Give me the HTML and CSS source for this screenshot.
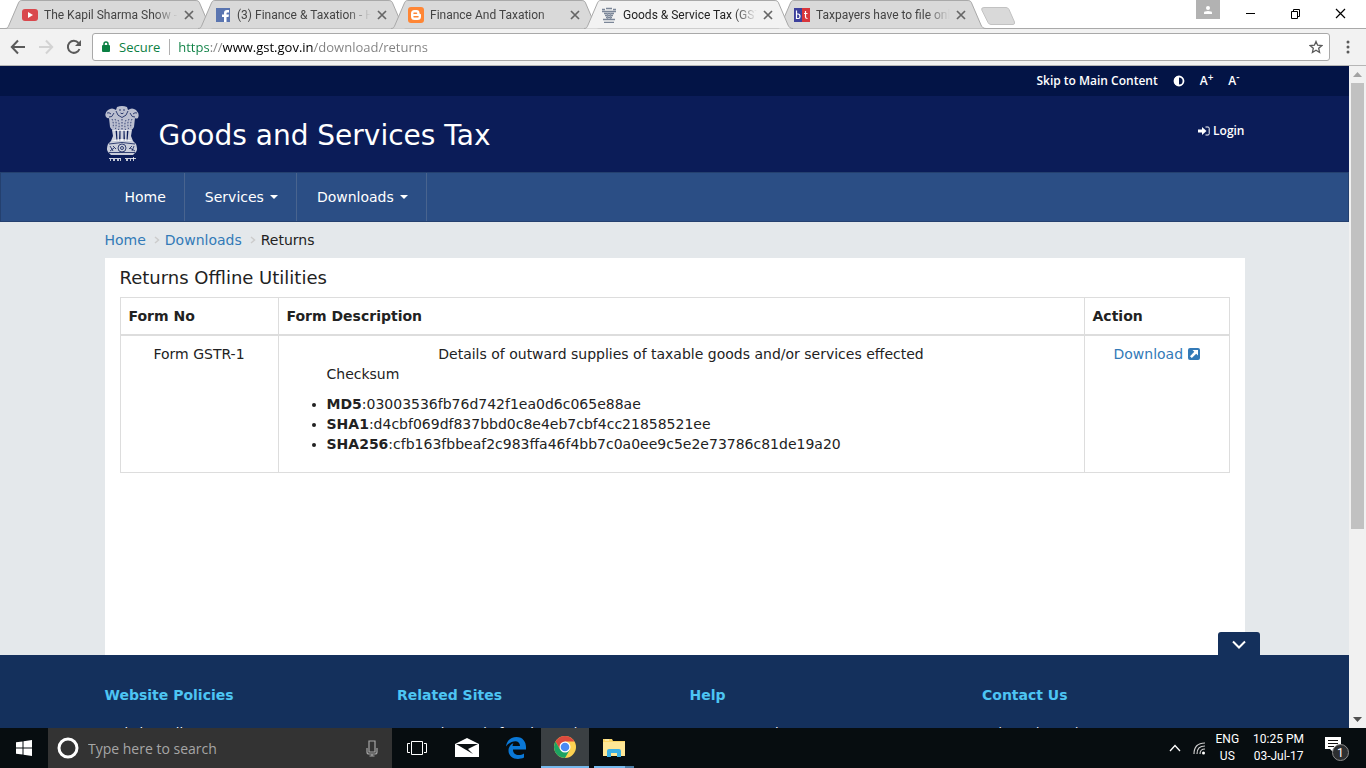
FILE: index.html
```html
<!DOCTYPE html>
<html lang="en">
<head>
  <meta charset="UTF-8">
  <meta name="viewport" content="width=device-width, initial-scale=1.0">
  <title>Goods &amp; Service Tax (GST)</title>
  <link rel="stylesheet" href="styles.css">
</head>
<body>
  <svg class="defs" width="0" height="0">
    <symbol id="tab-shape" viewBox="0 0 209 29">
      <path d="M0 28.500 C3 28.500 3 27 4 25 L13 4 C14.500 .5 15 .5 18 .5 H190 C193 .5 194 1 195 4 L204 25 C205 27 206 28.500 209 28.500"/>
    </symbol>
    <symbol id="close" viewBox="0 0 10 10">
      <path d="M1 1 L9 9 M9 1 L1 9" fill="none" stroke="currentColor" stroke-width="1.700"/>
    </symbol>
    <symbol id="emblem" viewBox="0 0 34 56">
      <g fill="currentColor">
        <path d="M12 1 Q17 -1 22 1 L23 4 Q27 1 31 4 Q35 8 33 12 Q31 13 30 12 L29 21 Q27 25 23 25 H11 Q7 25 5 21 L4 12 Q3 13 1 11 Q-1 7 3 4 Q7 1 11 4 Z" opacity=".72"/>
        <path d="M7 24 H10.500 L11.500 35 H6 L8 30 Z M12 24 H14.500 L14 35 H12.500 Z M15.500 24 H18.500 V35 H15.500 Z M19.500 24 H22 L21.500 35 H20 Z M23.500 24 H27 L26 30 L28 35 H22.500 Z" opacity=".8"/>
        <path d="M6 35 Q17 31 28 35 L31 38 Q33 43 31 46 L28 49 H6 L3 46 Q1 43 3 38 Z" opacity=".78"/>
        <path d="M4 52 H16 V53 H4 Z M20 52 H31 V53 H20 Z" opacity=".8"/>
        <path d="M5 53 h1 v2 h-1z M8 53 h2 v2 h-2z M12 53 h2 v2 h-2z M15 53 h1 v2 h-1z M21 53 h2 v2 h-2z M25 53 h1 v2 h-1z M28 51 h1 v4 h-1z" opacity=".75"/>
      </g>
      <g fill="none" stroke="var(--ink)" stroke-width=".8">
        <path d="M11 5 Q12 10 17 11.500 Q22 10 23 5 M14 4 H16 M18 4 H20 M15.500 7 Q17 8.500 18.500 7 M2 7 Q4 6 6 8 M28 8 Q30 6 32 7 M4 11 Q7 12 9 7 M30 11 Q27 12 25 7"/>
        <path d="M7 13 Q9 17 8 22 M10 13 Q12 17 10.500 23 M13 14 Q15 18 13.500 24 M17 13 V24 M21 14 Q19 18 20.500 24 M24 13 Q22 17 23.500 23 M27 13 Q25 17 26 22" stroke-dasharray="1.500 1.500"/>
        <path d="M4 38 Q17 35 30 38 M4 46.500 H30 M5 40 L8 45 M8 40 L11 43 M5 45 L9 42 M24 43 L27 40 M25 42 L30 45 M29 40 L27 45"/>
        <circle cx="17" cy="42" r="4"/>
        <circle cx="17" cy="42" r="1.500"/>
      </g>
    </symbol>
  </svg>

  <div class="tabs">
    <div class="tab">
      <svg class="tab-bg"><use href="#tab-shape"/></svg>
      <svg class="tab-icon" viewBox="0 0 16 16"><rect x="0" y="2" width="16" height="12" rx="3" fill="#d9484d"/><path d="M6 5 L11 8 L6 11 Z" fill="#fff"/></svg>
      <span class="tab-title">The Kapil Sharma Show - E</span>
      <button class="tab-close" aria-label="Close tab"><svg><use href="#close"/></svg></button>
    </div>
    <div class="tab">
      <svg class="tab-bg"><use href="#tab-shape"/></svg>
      <svg class="tab-icon" viewBox="0 0 16 16"><rect x="1" y="1" width="14" height="14" fill="#5a75b0"/><path d="M9 15 V10 H7 V7.500 H9 V6 Q9 3 12 3 H14 V5.500 H12.500 Q11.500 5.500 11.500 6.500 V7.500 H14 L13.500 10 H11.500 V15 Z" fill="#fff"/></svg>
      <span class="tab-title">(3) Finance &amp; Taxation - H</span>
      <button class="tab-close" aria-label="Close tab"><svg><use href="#close"/></svg></button>
    </div>
    <div class="tab">
      <svg class="tab-bg"><use href="#tab-shape"/></svg>
      <svg class="tab-icon" viewBox="0 0 16 16"><rect width="16" height="16" rx="3" fill="#ff8635"/><path d="M6.500 3 H8.500 Q11.500 3 11.500 6 Q11.500 7 12.500 7 Q13 7 13 8 V9.500 Q13 13 9.500 13 H6.500 Q3 13 3 9.500 V6.500 Q3 3 6.500 3 Z" fill="#fff"/><path d="M6 6.200 H8.500 M6 9.800 H10" stroke="#ff8635" stroke-width="1.500" stroke-linecap="round"/></svg>
      <span class="tab-title">Finance And Taxation</span>
      <button class="tab-close" aria-label="Close tab"><svg><use href="#close"/></svg></button>
    </div>
    <div class="tab active">
      <svg class="tab-bg"><use href="#tab-shape"/></svg>
      <svg class="tab-icon" viewBox="0 0 16 16" fill="none" stroke="#7b8698"><path d="M1 2.500 H4 M5 1.500 H11 M12 2.500 H15 M1 4.500 H15 M3 6.500 H13 M4 8.500 H12 M5 10.500 H11 M2 12.500 H14 M3 15.500 H13" stroke-width="1.400"/><path d="M6.500 6 V12 M9.500 6 V12" stroke="#8f99a8"/></svg>
      <span class="tab-title">Goods &amp; Service Tax (GST)</span>
      <button class="tab-close" aria-label="Close tab"><svg><use href="#close"/></svg></button>
    </div>
    <div class="tab">
      <svg class="tab-bg"><use href="#tab-shape"/></svg>
      <svg class="tab-icon" viewBox="0 0 16 16"><path d="M0 1 H8 V15 H0 Z" fill="#3d409c"/><path d="M8 1 H16 V15 H8 Z" fill="#d8363c"/><path d="M2.500 3.500 V11.500 H4.500 Q6 11.500 6 9.500 Q6 7 4 7 H2.500 M11.500 4 V10 Q11.500 11.500 13.500 11.500 M10 6.500 H13.500" fill="none" stroke="#fff" stroke-width="1.200"/></svg>
      <span class="tab-title">Taxpayers have to file onl</span>
      <button class="tab-close" aria-label="Close tab"><svg><use href="#close"/></svg></button>
    </div>
    <button class="new-tab" aria-label="New tab"><svg width="35" height="18"><path d="M3 .5 H25 Q27 .5 28 2.500 L33.500 15 Q34 17.500 32 17.500 H10 Q8 17.500 7 15.500 L.8 3 Q0 .5 3 .5 Z" fill="#d9d9d9" stroke="#c2c2c2"/></svg></button>
    <div class="window-buttons">
      <button class="profile" aria-label="Profile"><svg width="8" height="8" viewBox="0 0 8 8" fill="#fff"><circle cx="4" cy="2" r="2"/><path d="M0 8 V6.500 Q0 5 4 5 Q8 5 8 6.500 V8 Z"/></svg></button>
      <button class="win" aria-label="Minimize"><svg width="11" height="11"><path d="M1 5.500 H10" stroke="#000"/></svg></button>
      <button class="win" aria-label="Restore"><svg width="11" height="11" fill="none" stroke="#000"><path d="M1.500 3.500 H7.500 V10.500 H1.500 Z M3.500 3 V1.500 H9.500 V8.500 H8"/></svg></button>
      <button class="win" aria-label="Close"><svg width="11" height="11"><path d="M1 1 L10 10 M10 1 L1 10" stroke="#000" stroke-width="1.200"/></svg></button>
    </div>
  </div>

  <div class="toolbar">
    <button class="tool" aria-label="Back"><svg width="16" height="16" fill="none" stroke="#5a5a5a" stroke-width="2"><path d="M15 8 H2.500 M8 1.500 L1.800 8 L8 14.500"/></svg></button>
    <button class="tool" aria-label="Forward"><svg width="16" height="16" fill="none" stroke="#d3d3d3" stroke-width="2"><path d="M1 8 H13.500 M8 1.500 L14.200 8 L8 14.500"/></svg></button>
    <button class="tool" aria-label="Reload"><svg width="16" height="16"><path d="M13.500 10 A6 6 0 1 1 12.500 4" fill="none" stroke="#5a5a5a" stroke-width="2"/><path d="M15 1 V7 H9 Z" fill="#5a5a5a"/></svg></button>
    <div class="omnibox">
      <svg width="8" height="12"><path d="M2 5 V3 Q2 1 4 1 Q6 1 6 3 V5" fill="none" stroke="#0b8043" stroke-width="1.500"/><rect y="4" width="8" height="7" rx="1" fill="#0b8043"/></svg>
      <label for="url" class="secure">Secure</label>
      <input id="url" class="url" type="text" value="https://www.gst.gov.in/download/returns">
      <button class="star" aria-label="Bookmark"><svg width="14" height="14" viewBox="0 0 14 14"><path d="M7 1.500 L8.600 5.200 L12.800 5.600 L9.700 8.300 L10.600 12.500 L7 10.300 L3.400 12.500 L4.300 8.300 L1.200 5.600 L5.400 5.200 Z" fill="none" stroke="#5a5a5a" stroke-width="1.300"/></svg></button>
    </div>
    <button class="menu" aria-label="Menu"><svg width="4" height="14" fill="#5a5a5a"><circle cx="2" cy="2" r="1.500"/><circle cx="2" cy="7" r="1.500"/><circle cx="2" cy="12" r="1.500"/></svg></button>
  </div>

  <div class="view">
    <div class="site">
      <div class="skip-bar">
        <div class="container">
          <a href="#main">Skip to Main Content</a>
          <a href="#" aria-label="Contrast"><svg width="12" height="12"><circle cx="6" cy="6" r="4.500" fill="none" stroke="#fff" stroke-width="1.800"/><path d="M6 1 A5 5 0 0 0 6 11 Z" fill="#fff"/></svg></a>
          <a href="#">A<sup>+</sup></a>
          <a href="#">A<sup>-</sup></a>
        </div>
      </div>
      <header class="header">
        <div class="container">
          <svg class="emblem" width="34" height="56"><use href="#emblem"/></svg>
          <h1>Goods and Services Tax</h1>
          <a class="login" href="#"><svg width="12" height="10" viewBox="0 0 12 10"><path d="M0 3.500 H4 V1 L8.500 5 L4 9 V6.500 H0 Z" fill="#fff"/><path d="M7.500 1 H10 Q11.200 1 11.200 2.200 V7.800 Q11.200 9 10 9 H7.500" fill="none" stroke="#fff"/></svg>Login</a>
        </div>
      </header>
      <nav class="nav">
        <div class="container">
          <a href="#">Home</a>
          <a href="#">Services<span class="caret"></span></a>
          <a href="#">Downloads<span class="caret"></span></a>
        </div>
      </nav>
      <div class="container">
        <div class="breadcrumb">
          <a href="#">Home</a>
          <svg width="6" height="8"><path d="M1 1 L4.500 4 L1 7" fill="none" stroke="#ccc" stroke-width="1.500"/></svg>
          <a href="#">Downloads</a>
          <svg width="6" height="8"><path d="M1 1 L4.500 4 L1 7" fill="none" stroke="#ccc" stroke-width="1.500"/></svg>
          <span>Returns</span>
        </div>
        <main id="main" class="card">
          <h2>Returns Offline Utilities</h2>
          <table class="forms">
            <thead>
              <tr>
                <th class="col-form">Form No</th>
                <th>Form Description</th>
                <th class="col-action">Action</th>
              </tr>
            </thead>
            <tbody>
              <tr>
                <td>Form GSTR-1</td>
                <td>
                  Details of outward supplies of taxable goods and/or services effected
                  <div class="checksum">
                    Checksum
                    <ul>
                      <li><b>MD5</b>:03003536fb76d742f1ea0d6c065e88ae</li>
                      <li><b>SHA1</b>:d4cbf069df837bbd0c8e4eb7cbf4cc21858521ee</li>
                      <li><b>SHA256</b>:cfb163fbbeaf2c983ffa46f4bb7c0a0ee9c5e2e73786c81de19a20</li>
                    </ul>
                  </div>
                </td>
                <td><a href="#">Download <svg width="12" height="12"><rect width="12" height="12" rx="2" fill="#337ab7"/><path d="M4.500 2 H10 V7.500 L8.200 5.700 L3.800 10 L2 8.200 L6.300 3.800 Z" fill="#fff"/></svg></a></td>
              </tr>
            </tbody>
          </table>
        </main>
      </div>
      <footer class="footer">
        <div class="container">
          <button class="toggle" aria-label="Toggle footer"><svg width="14" height="9"><path d="M1 1.500 L7 7.500 L13 1.500" fill="none" stroke="#fff" stroke-width="2"/></svg></button>
          <div class="footer-cols">
            <div><h3>Website Policies</h3><a href="#">Website Policy</a></div>
            <div><h3>Related Sites</h3><a href="#">Central Board of Excise and Customs</a></div>
            <div><h3>Help</h3><a href="#">System Requirements</a></div>
            <div><h3>Contact Us</h3><span class="help-desk">Help Desk Number:</span></div>
          </div>
        </div>
      </footer>
    </div>
    <div class="scrollbar">
      <svg width="9" height="5"><path d="M0 5 L4.500 0 L9 5 Z" fill="#a3a3a3"/></svg>
      <div class="track"><div class="thumb"></div></div>
      <svg width="9" height="5"><path d="M0 0 L4.500 5 L9 0 Z" fill="#505050"/></svg>
    </div>
  </div>

  <div class="taskbar">
    <button class="task" aria-label="Start"><svg width="16" height="16" fill="#fff"><path d="M0 2.300 L6.500 1.400 V7.500 H0 Z M7.500 1.200 L16 0 V7.500 H7.500 Z M0 8.500 H6.500 V14.600 L0 13.700 Z M7.500 8.500 H16 V16 L7.500 14.800 Z"/></svg></button>
    <div class="search">
      <svg width="22" height="22"><circle cx="11" cy="11" r="9" fill="none" stroke="#fff" stroke-width="3"/></svg>
      <input type="text" aria-label="Search" placeholder="Type here to search">
      <svg width="12" height="17" fill="none" stroke="#a6a6a6" stroke-width="1.200"><path d="M3 1 H9 V12 H3 Z M1 8 V12 Q1 14 3 14 H9 Q11 14 11 12 V8 M6 14 V16 M3.500 16 H8.500"/></svg>
    </div>
    <button class="task task-view" aria-label="Task view"><svg width="20" height="14" fill="none" stroke="#fff"><path d="M4.500 .5 H15.500 V13.500 H4.500 Z M3 2.500 H.5 V11.500 H3 M17 2.500 H19.500 V11.500 H17"/></svg></button>
    <button class="task" aria-label="Mail"><svg width="24" height="20"><path d="M0 6 L12 0 L24 6 V19 H0 Z" fill="#fff"/><path d="M1 6 L23 6 L13 11 L18 16 L1 6" fill="#0b1012"/></svg></button>
    <button class="task" aria-label="Edge"><svg width="20" height="22" viewBox="0 0 20 22"><path d="M0 9.500 C1 3 5.500 0 10.500 0 C17 0 20 5 20 10 V12.500 H7 C7 19 14 19 18 16.500 V20.500 C11 24 2.500 21 2.500 13.500 C2.500 10 4.500 7.500 7.500 6 C6.800 7 6.600 8.500 6.600 9 H14 C14 2 5 3 0 9.500 Z" fill="#0a78d7"/></svg></button>
    <button class="task running" aria-label="Chrome"><svg width="22" height="22" viewBox="0 0 22 22"><circle cx="11" cy="11" r="11" fill="#fdd151"/><path d="M1.500 5.500 A11 11 0 0 1 20.500 5.500 H11 L6.200 13.800 Z" fill="#dc4a3e"/><path d="M1.500 5.500 A11 11 0 0 0 11 22 L15.800 13.800 L11 16 L6.200 13.800 Z" fill="#1da362"/><circle cx="11" cy="11" r="5.500" fill="#fff"/><circle cx="11" cy="11" r="4.300" fill="#4a8af4"/></svg></button>
    <button class="task open" aria-label="File Explorer"><svg width="22" height="18"><path d="M0 0 H9 L10 2 H22 V17 H0 Z" fill="#fbd668"/><path d="M0 3 H22 V17 H0 Z" fill="#ffe796"/><path d="M2 1 H6" stroke="#fff6d0"/><path d="M4 18 V12 Q4 10 6 10 H16 Q18 10 18 12 V18 H14 V14 H8 V18 Z" fill="#3bb0e5"/></svg></button>
    <div class="tray">
      <svg width="12" height="8"><path d="M1 7 L6 1.500 L11 7" fill="none" stroke="#fff" stroke-width="1.300"/></svg>
      <svg width="13" height="13" fill="none" stroke="#ccc"><path d="M1 12 Q1 1 12 1 M4 12 Q4 4 12 4 M7 12 Q7 7 12 7" stroke-width="1.200"/><circle cx="10.500" cy="11" r="1.500" fill="#fff" stroke="none"/></svg>
      <div class="lang">ENG<br>US</div>
      <div class="clock">10:25 PM<br>03-Jul-17</div>
      <svg class="notes" width="26" height="26"><path d="M1 2 H17 V14 H10 V18 L6 14 H1 Z" fill="#fff"/><path d="M4 5.500 H14 M4 8.500 H14 M4 11.500 H10" stroke="#111"/><circle cx="16.500" cy="17.500" r="8" fill="#2d2f31" stroke="#8b8b8b"/><text x="13" y="22">1</text></svg>
    </div>
  </div>
</body>
</html>
```
FILE: styles.css
```css
* {
  box-sizing: border-box;
}
body {
  margin: 0;
  height: 100vh;
  display: flex;
  flex-direction: column;
  overflow: hidden;
  font-family: "DejaVu Sans", sans-serif;
  font-size: 14px;
  line-height: 20px;
  color: #222;
}
button {
  display: flex;
  justify-content: center;
  align-items: center;
  padding: 0;
  border: none;
  background: none;
}
a {
  color: #337ab7;
  text-decoration: none;
}
h1, h2, h3, ul {
  margin: 0;
}
.defs {
  position: absolute;
}

/* browser tabs */
.tabs {
  display: flex;
  flex: none;
  height: 28px;
  padding-left: 5px;
  background: #fff;
  font-family: Roboto, sans-serif;
  font-size: 12px;
}
.tab {
  position: relative;
  display: flex;
  align-items: center;
  flex: none;
  width: 209px;
  height: 29px;
  padding: 0 20px 0 17px;
  margin-right: -16px;
  color: #444;
}
.tab-bg {
  position: absolute;
  top: 0;
  left: 0;
  width: 209px;
  height: 29px;
  fill: #d9d9d9;
  stroke: #a9a9a9;
}
.tab.active {
  z-index: 1;
  color: #222;
}
.tab.active .tab-bg {
  fill: #f2f2f2;
}
.tab-icon {
  position: relative;
  width: 16px;
  height: 16px;
  margin-right: 6px;
}
.tab-title {
  position: relative;
  flex: 1;
  overflow: hidden;
  white-space: nowrap;
  margin-right: 6px;
  -webkit-mask-image: linear-gradient(to left, transparent, #000 24px);
}
.tab-close {
  position: relative;
  color: #666;
}
.tab-close svg {
  width: 10px;
  height: 10px;
}
.new-tab {
  height: 31px;
  margin-left: 11px;
}
.window-buttons {
  display: flex;
  margin-left: auto;
  padding-right: 3px;
}
.profile {
  width: 24px;
  height: 19px;
  margin-right: 8px;
  background: #b2b2b2;
}
.win {
  width: 45px;
  height: 27px;
}

/* address bar */
.toolbar {
  display: flex;
  align-items: center;
  flex: none;
  height: 38px;
  padding-left: 4px;
  background: #f2f2f2;
  border-top: 1px solid #a9a9a9;
  border-bottom: 1px solid #b6b6b6;
  font-family: "Open Sans", sans-serif;
}
.tool {
  width: 28px;
  height: 28px;
}
.omnibox {
  display: flex;
  align-items: center;
  flex: 1;
  height: 28px;
  margin-left: 4px;
  padding: 0 6px 0 9px;
  background: #fff;
  border: 1px solid #a9a9a9;
  border-radius: 3px;
}
.secure {
  padding: 0 9px;
  font-size: 13px;
  line-height: 16px;
  color: #0b8043;
  border-right: 1px solid #b0b0b0;
}
.url {
  flex: 1;
  padding: 0;
  margin-left: 8px;
  border: none;
  outline: none;
  font: 13px "Open Sans", sans-serif;
  color: transparent;
  background: linear-gradient(to right, #0b8043 32px, #808080 32px, #808080 45px, #000 45px, #000 136px, #808080 136px);
  -webkit-background-clip: text;
  background-clip: text;
}
.menu {
  width: 36px;
  height: 28px;
}

/* page */
.view {
  display: flex;
  flex: 1;
  min-height: 0;
}
.site {
  flex: 1;
  overflow: hidden;
  background: #e4e8eb;
}
.container {
  max-width: 1170px;
  margin: 0 auto;
  padding: 0 15px;
}
.skip-bar {
  background: #031446;
}
.skip-bar .container {
  display: flex;
  justify-content: flex-end;
  align-items: center;
  gap: 15px;
  height: 30px;
  padding-right: 20px;
}
.skip-bar a, .login {
  display: flex;
  align-items: center;
  font-family: "Open Sans", sans-serif;
  font-size: 12px;
  font-weight: 600;
  color: #fff;
}
.skip-bar sup {
  font-size: 10px;
  line-height: 12px;
  align-self: flex-start;
}
.header {
  background: #0b1c58;
}
.header .container {
  display: flex;
  align-items: center;
  height: 76px;
}
.emblem {
  --ink: #0b1c58;
  color: #fff;
}
.header h1 {
  margin-left: 20px;
  padding-top: 4px;
  font-size: 28px;
  line-height: 36px;
  font-weight: normal;
  color: #fff;
}
.login {
  gap: 3px;
  margin-left: auto;
  padding-bottom: 6px;
}
.nav {
  background: #2b4e85;
  border: 1px solid #24406f;
}
.nav .container {
  display: flex;
}
.nav a {
  display: flex;
  align-items: center;
  height: 48px;
  padding: 0 18px 0 20px;
  color: #fff;
  border-right: 1px solid #49648f;
}
.caret {
  margin-left: 6px;
  border-top: 4px solid #fff;
  border-left: 4px solid transparent;
  border-right: 4px solid transparent;
}
.breadcrumb {
  display: flex;
  align-items: center;
  padding: 8px 0;
}
.breadcrumb svg {
  margin: 0 5px 0 8px;
}
.card {
  min-height: 397px;
  padding: 10px 15px;
  background: #fff;
}
.card h2 {
  margin-bottom: 9px;
  font-size: 18px;
  line-height: 20px;
  font-weight: normal;
}
.forms {
  width: 100%;
  border-collapse: collapse;
}
.forms th, .forms td {
  padding: 8px;
  border: 1px solid #ddd;
  text-align: left;
  vertical-align: top;
}
.forms th {
  border-bottom-width: 2px;
}
.forms td {
  text-align: center;
}
.col-form {
  width: 158px;
}
.col-action {
  width: 145px;
}
.forms svg {
  vertical-align: -1px;
}
.checksum {
  padding-left: 40px;
  text-align: left;
}
.checksum ul {
  margin: 10px 0;
  padding: 0;
}

/* footer */
.footer {
  background: #14305c;
}
.footer .container {
  position: relative;
}
.toggle {
  position: absolute;
  top: -23px;
  right: 0;
  width: 42px;
  height: 24px;
  background: #14305c;
  border-radius: 3px 3px 0 0;
}
.footer-cols {
  display: grid;
  grid-template-columns: repeat(4, 1fr);
  margin-right: -30px;
  padding: 30px 0;
}
.footer h3 {
  margin-bottom: 17px;
  font-size: 14px;
  color: #4dc5f3;
}
.footer a {
  font-size: 13px;
  color: #fff;
}
.help-desk {
  font-size: 12px;
  color: #fff;
}

.scrollbar {
  display: flex;
  flex-direction: column;
  align-items: center;
  width: 17px;
  padding: 6px 0;
  background: #f1f1f1;
}
.track {
  flex: 1;
  padding: 6px 0;
}
.thumb {
  width: 13px;
  height: 71%;
  background: #c1c1c1;
}

/* taskbar */
.taskbar {
  display: flex;
  flex: none;
  height: 40px;
  background: #070d10;
}
.task {
  width: 48px;
  margin-right: 1px;
}
.task:first-child {
  margin-right: 0;
}
.task-view {
  width: 50px;
}
.running {
  background: #3b4043;
  border-bottom: 2px solid #76b9ed;
}
.open {
  background: linear-gradient(to right, transparent 4px, #76b9ed 4px, #76b9ed 35px, #4a7ba3 35px, #4a7ba3 44px, transparent 44px) bottom / 100% 2px no-repeat;
}
.search {
  display: flex;
  align-items: center;
  width: 344px;
  padding: 0 14px 0 9px;
  background: #333;
}
.search input {
  flex: 1;
  margin-left: 9px;
  padding: 0;
  border: none;
  outline: none;
  background: none;
  font: 14px "Open Sans", sans-serif;
  color: #fff;
}
.search input::placeholder {
  color: #a6a6a6;
}
.tray {
  display: flex;
  align-items: center;
  margin-left: auto;
  padding-right: 16px;
  font-family: Roboto, sans-serif;
  font-size: 12px;
  line-height: 17px;
  text-align: center;
  color: #fff;
}
.tray svg {
  margin-right: 12px;
}
.lang {
  margin: 0 14px 0 -2px;
}
.clock {
  margin-right: 20px;
}
.tray .notes {
  margin: 0;
}
.notes text {
  font-size: 12px;
  fill: #fff;
}
```
